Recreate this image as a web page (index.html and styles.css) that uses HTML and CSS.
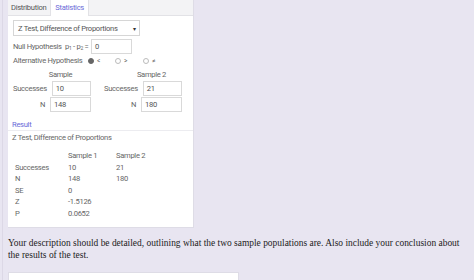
FILE: index.html
```html
<!DOCTYPE html>
<html>
<head>
<meta charset="utf-8">
<link rel="stylesheet" href="styles.css">
</head>
<body>
<div class="page">
  <div class="panel">
    <div class="tabs">
      <div class="tab">Distribution</div>
      <div class="tab active">Statistics</div>
    </div>
    <div class="body">
      <div class="select"><span>Z Test, Difference of Proportions</span><span class="caret">▾</span></div>
      <div class="row null">
        <span class="nlab">Null Hypothesis</span>
        <span class="pp">p<sub>1</sub> - p<sub>2</sub> =</span>
        <span class="input">0</span>
      </div>
      <div class="row alt">
        <span class="altlab">Alternative Hypothesis</span>
        <span class="opt"><span class="radio on"></span><span class="sym">&lt;</span></span>
        <span class="opt"><span class="radio"></span><span class="sym">&gt;</span></span>
        <span class="opt"><span class="radio"></span><span class="sym">≠</span></span>
      </div>
      <div class="samples">
        <div class="sample">
          <div class="shead">Sample</div>
          <div class="srow"><span class="lab">Successes</span><span class="input">10</span></div>
          <div class="srow"><span class="lab">N</span><span class="input">148</span></div>
        </div>
        <div class="sample">
          <div class="shead">Sample 2</div>
          <div class="srow"><span class="lab">Successes</span><span class="input">21</span></div>
          <div class="srow"><span class="lab">N</span><span class="input">180</span></div>
        </div>
      </div>
    </div>
    <div class="result-title">Result</div>
    <div class="result">
      <div class="rname">Z Test, Difference of Proportions</div>
      <table>
        <tr><td></td><td>Sample 1</td><td>Sample 2</td></tr>
        <tr><td>Successes</td><td>10</td><td>21</td></tr>
        <tr><td>N</td><td>148</td><td>180</td></tr>
        <tr><td>SE</td><td>0</td><td></td></tr>
        <tr><td>Z</td><td>-1.5126</td><td></td></tr>
        <tr><td>P</td><td>0.0652</td><td></td></tr>
      </table>
    </div>
  </div>
  <p class="desc">Your description should be detailed, outlining what the two sample populations are. Also include your conclusion about the results of the test.</p>
  <div class="answer"></div>
</div>
</body>
</html>
```
FILE: styles.css
```css
html, body { margin: 0; padding: 0; }
body {
  background: #e8e5f1;
  width: 474px;
  height: 280px;
  overflow: hidden;
}
.page {
  margin-left: 2px;
  border-left: 1px solid #dcd8e6;
  padding-left: 5px;
  height: 280px;
}
.panel {
  width: 186px;
  height: 228px;
  background: #fff;
  border-right: 1px solid #dedce6;
  border-bottom: 1px solid #dedce6;
  font-family: Roboto, "Liberation Sans", sans-serif;
  font-size: 7.6px;
  letter-spacing: -0.3px;
  color: #666;
  box-sizing: border-box;
  white-space: nowrap;
}
.tabs {
  display: flex;
  height: 16px;
  background: #f3f3f5;
  border-bottom: 1px solid #e2e2e6;
  box-sizing: border-box;
}
.tab {
  padding: 0 4px 0 3px;
  line-height: 15px;
  color: #555;
}
.tab.active {
  background: #fff;
  color: #6a6ad8;
  border-left: 1px solid #e2e2e6;
  border-right: 1px solid #e2e2e6;
  height: 16px;
  padding: 0 4px;
}
.body { padding: 4px 0 0 5px; }
.select {
  width: 127px;
  height: 16px;
  border: 1px solid #d6d6d6;
  box-sizing: border-box;
  display: flex;
  align-items: center;
  justify-content: space-between;
  padding: 0 3px 0 4px;
  color: #555;
}
.caret { font-size: 6px; color: #333; }
.row { display: flex; align-items: center; }
.null { margin-top: 4px; height: 13px; }
.nlab { width: 52px; }
.pp { width: 26px; }
.pp sub { font-size: 5px; vertical-align: -1px; }
.input {
  display: inline-flex;
  align-items: center;
  border: 1px solid #d9d9d9;
  box-sizing: border-box;
  width: 41px;
  height: 15px;
  padding-left: 3px;
  color: #555;
}
.alt { margin-top: 2px; height: 11px; }
.altlab { width: 75px; }
.opt { display: flex; align-items: center; width: 27px; }
.opt:nth-child(3) { width: 28px; }
.radio {
  width: 4px; height: 4px;
  border: 1px solid #bbb;
  border-radius: 50%;
  background: #fff;
}
.radio.on { background: #666; border-color: #666; }
.sym { margin-left: 3px; font-size: 6.5px; }
.samples { display: flex; margin-top: 3px; }
.sample { width: 91px; }
.shead { text-align: center; padding-left: 4px; height: 11px; line-height: 11px; }
.srow { display: flex; justify-content: flex-end; align-items: center; height: 16px; padding-right: 13px; }
.lab { margin-right: 5px; }
.result-title {
  margin-top: 7px;
  padding-left: 4px;
  color: #6a6ad8;
  height: 12px;
  line-height: 11px;
  border-bottom: 1px solid #ececf0;
  box-sizing: border-box;
}
.result { padding: 1px 0 0 4px; }
.rname { height: 12px; line-height: 12px; }
table { border-collapse: collapse; margin-top: 6px; margin-left: 3px; }
td { padding: 0; height: 11.5px; line-height: 11.5px; }
td:first-child { width: 53px; }
td:nth-child(2) { width: 48px; }
.desc {
  margin: 9px 0 0 0;
  font-family: "Liberation Serif", serif;
  font-size: 9.45px;
  line-height: 12px;
  color: #222;
  width: 456px;
}
.answer {
  margin-top: 11px;
  width: 229px;
  height: 20px;
  background: #fff;
  border: 1px solid #dedce6;
}
```
